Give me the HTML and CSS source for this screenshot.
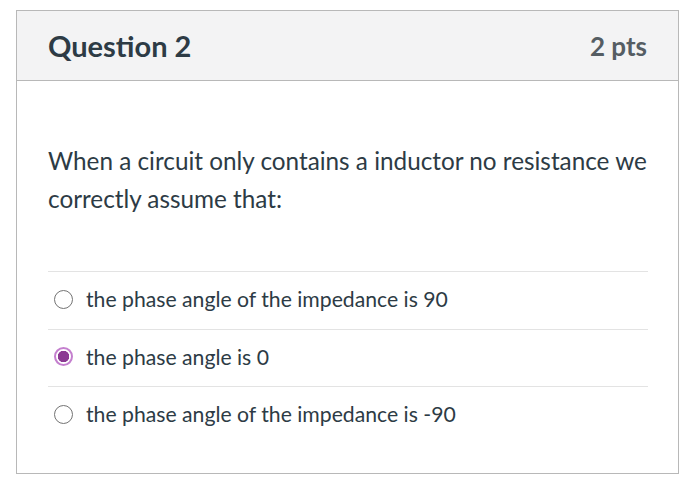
FILE: index.html
```html
<!DOCTYPE html>
<html>
<head>
<meta charset="utf-8">
<link rel="stylesheet" href="styles.css">
</head>
<body>
<div class="question">
  <div class="q-header">
    <span class="q-title">Question 2</span>
    <span class="q-pts">2 pts</span>
  </div>
  <div class="q-body">
    <p class="q-text">When a circuit only contains a inductor no resistance we correctly assume that:</p>
    <div class="answers">
      <div class="answer">
        <span class="radio"></span>
        <span class="label">the phase angle of the impedance is 90</span>
      </div>
      <div class="answer">
        <span class="radio checked"></span>
        <span class="label">the phase angle is 0</span>
      </div>
      <div class="answer">
        <span class="radio"></span>
        <span class="label">the phase angle of the impedance is -90</span>
      </div>
    </div>
  </div>
</div>
</body>
</html>
```
FILE: styles.css
```css
html, body {
  margin: 0;
  padding: 0;
  background: #ffffff;
}
body {
  padding: 10px 0 0 16px;
  font-family: Lato, "Liberation Sans", sans-serif;
  color: #2d3b45;
}
.question {
  width: 663px;
  height: 464px;
  box-sizing: border-box;
  border: 1.5px solid #b8b8b8;
}
.q-header {
  height: 70px;
  box-sizing: border-box;
  background: #f3f3f4;
  border-bottom: 1.5px solid #b8b8b8;
  display: flex;
  justify-content: space-between;
  align-items: center;
  padding: 0 31px 0 31px;
}
.q-title {
  font-size: 29px;
  font-weight: 700;
  color: #2d3b45;
}
.q-pts {
  font-size: 26px;
  font-weight: 700;
  color: #555d63;
}
.q-body {
  padding: 0 30px 0 31px;
}
.q-text {
  margin: 61px 0 0 0;
  font-size: 24.3px;
  line-height: 38px;
  color: #2d3b45;
}
.answers {
  margin-top: 53px;
}
.answer {
  display: flex;
  align-items: center;
  gap: 13px;
  height: 57.5px;
  border-top: 1.5px solid #e3e3e3;
  padding-left: 6px;
  padding-bottom: 2px;
  box-sizing: border-box;
}
.radio {
  width: 19px;
  height: 19px;
  box-sizing: border-box;
  border: 1.5px solid #737373;
  border-radius: 50%;
  background: #fff;
  flex: none;
}
.radio.checked {
  border: 2px solid #c47fce;
  background: radial-gradient(circle, #8b3a93 0 5.5px, #ffffff 6px);
}
.label {
  font-size: 21.2px;
  color: #2d3b45;
}
```
